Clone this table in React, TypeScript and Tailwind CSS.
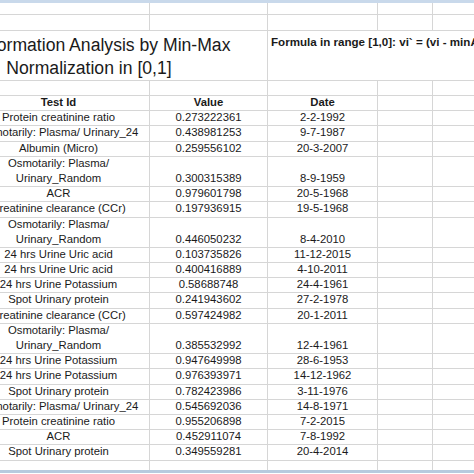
const rows: { test: string[]; value: string; date: string }[] = [
  { test: ['Protein creatinine ratio'], value: '0.273222361', date: '2-2-1992' },
  { test: ['Osmotarily: Plasma/ Urinary_24'], value: '0.438981253', date: '9-7-1987' },
  { test: ['Albumin (Micro)'], value: '0.259556102', date: '20-3-2007' },
  { test: ['Osmotarily: Plasma/', 'Urinary_Random'], value: '0.300315389', date: '8-9-1959' },
  { test: ['ACR'], value: '0.979601798', date: '20-5-1968' },
  { test: ['Creatinine clearance (CCr)'], value: '0.197936915', date: '19-5-1968' },
  { test: ['Osmotarily: Plasma/', 'Urinary_Random'], value: '0.446050232', date: '8-4-2010' },
  { test: ['24 hrs Urine Uric acid'], value: '0.103735826', date: '11-12-2015' },
  { test: ['24 hrs Urine Uric acid'], value: '0.400416889', date: '4-10-2011' },
  { test: ['24 hrs Urine Potassium'], value: '0.58688748', date: '24-4-1961' },
  { test: ['Spot Urinary protein'], value: '0.241943602', date: '27-2-1978' },
  { test: ['Creatinine clearance (CCr)'], value: '0.597424982', date: '20-1-2011' },
  { test: ['Osmotarily: Plasma/', 'Urinary_Random'], value: '0.385532992', date: '12-4-1961' },
  { test: ['24 hrs Urine Potassium'], value: '0.947649998', date: '28-6-1953' },
  { test: ['24 hrs Urine Potassium'], value: '0.976393971', date: '14-12-1962' },
  { test: ['Spot Urinary protein'], value: '0.782423986', date: '3-11-1976' },
  { test: ['Osmotarily: Plasma/ Urinary_24'], value: '0.545692036', date: '14-8-1971' },
  { test: ['Protein creatinine ratio'], value: '0.955206898', date: '7-2-2015' },
  { test: ['ACR'], value: '0.452911074', date: '7-8-1992' },
  { test: ['Spot Urinary protein'], value: '0.349559281', date: '20-4-2014' },
];

const line = 'border-[#d6d6d6]';

function EmptyRow({ h }: { h: string }) {
  return (
    <div className={`flex ${h}`}>
      <div className={`w-[182px] shrink-0 border-r border-b ${line}`} />
      <div className={`w-[118px] shrink-0 border-r border-b ${line}`} />
      <div className={`w-[110px] shrink-0 border-r border-b ${line}`} />
      <div className={`w-[55px] shrink-0 border-r border-b ${line}`} />
      <div className={`flex-1 border-b ${line}`} />
    </div>
  );
}

function DataRow({ test, value, date, bold }: { test: string[]; value: string; date: string; bold?: boolean }) {
  const tall = test.length > 1;
  const weight = bold ? 'font-bold' : '';
  return (
    <div className={`flex ${tall ? 'h-[30.4px]' : 'h-[15.2px]'} text-[11.3px] leading-[15.2px] text-[#1a1a1a] ${weight}`}>
      <div className={`w-[182px] shrink-0 border-r border-b ${line} flex flex-col items-center justify-end whitespace-nowrap`}>
        {test.map((t, i) => (
          <span key={i}>{t}</span>
        ))}
      </div>
      <div className={`w-[118px] shrink-0 border-r border-b ${line} flex items-end justify-center`}>{value}</div>
      <div className={`w-[110px] shrink-0 border-r border-b ${line} flex items-end justify-center`}>{date}</div>
      <div className={`w-[55px] shrink-0 border-r border-b ${line}`} />
      <div className={`flex-1 border-b ${line}`} />
    </div>
  );
}

export default function App() {
  return (
    <div className="w-[474px] h-[474px] overflow-hidden bg-white font-['Liberation_Sans',Arial,sans-serif]">
      <div className="h-[3px] bg-[#c9d9eb]" />
      <div className="ml-[-32px] w-[506px]">
        <EmptyRow h="h-[12px]" />
        <EmptyRow h="h-[16px]" />

        <div className="flex h-[50px]">
          <div className={`w-[300px] shrink-0 border-r border-b ${line} flex items-end overflow-hidden`}>
            <div className="ml-[-58px] w-[358px] shrink-0 text-center text-[17.6px] leading-[23px] text-[#1a1a1a] whitespace-nowrap">
              Transformation Analysis by Min-Max
              <br />
              Normalization in [0,1]
            </div>
          </div>
          <div className={`flex-1 border-b ${line} overflow-hidden pl-[3px] pt-[4px]`}>
            <div className="text-[11.6px] leading-[13px] font-bold text-[#1a1a1a] whitespace-nowrap">
              Formula in range [1,0]: vi` = (vi - minA)/(maxA - minA)
            </div>
          </div>
        </div>

        <EmptyRow h="h-[15px]" />
        <DataRow test={['Test Id']} value="Value" date="Date" bold />
        {rows.map((r, i) => (
          <DataRow key={i} test={r.test} value={r.value} date={r.date} />
        ))}
        <div className="flex h-[9.4px]">
          <div className={`w-[182px] shrink-0 border-r ${line}`} />
          <div className={`w-[118px] shrink-0 border-r ${line}`} />
          <div className={`w-[110px] shrink-0 border-r ${line}`} />
          <div className={`w-[55px] shrink-0 border-r ${line}`} />
          <div className="flex-1" />
        </div>
      </div>
      <div className="h-[3px] bg-[#b7cade]" />
    </div>
  );
}
